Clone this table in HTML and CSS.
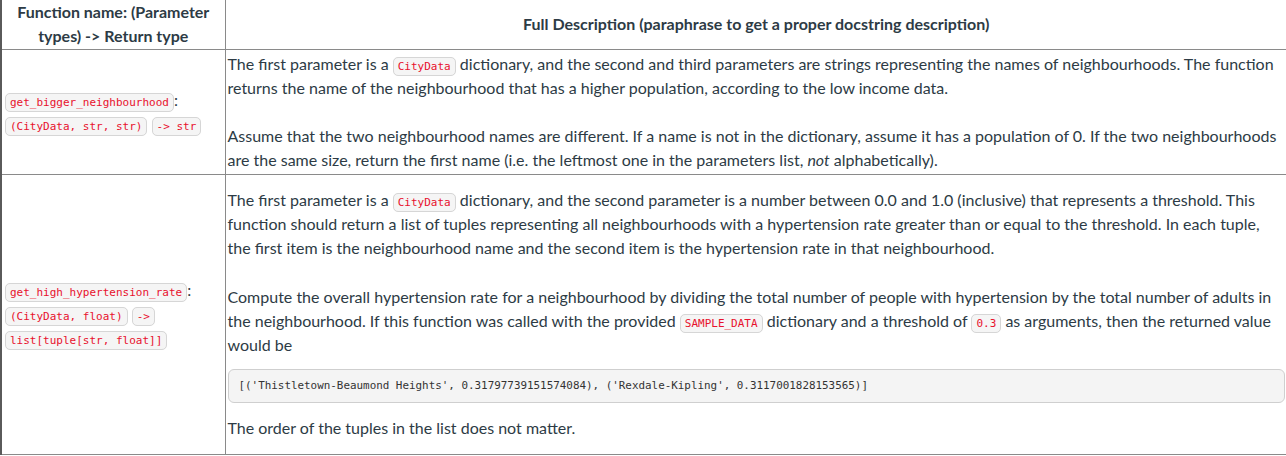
FILE: index.html
```html
<!DOCTYPE html>
<html lang="en">
<head>
<meta charset="utf-8">
<title>Functions</title>
<link rel="stylesheet" href="styles.css">
</head>
<body>
<div class="page">
<table class="spec">
  <thead>
    <tr>
      <th class="col-name">Function name: (Parameter types) -&gt; Return type</th>
      <th class="col-desc">Full Description (paraphrase to get a proper docstring description)</th>
    </tr>
  </thead>
  <tbody>
    <tr class="row-one">
      <td class="name-cell"><code>get_bigger_neighbourhood</code>: <code>(CityData, str, str)</code> <code>-&gt; str</code></td>
      <td class="desc-cell">
        <p class="gap-after">The first parameter is a <code>CityData</code> dictionary, and the second and third parameters are strings representing the names of neighbourhoods. The function returns the name of the neighbourhood that has a higher population, according to the low income data.</p>
        <p>Assume that the two neighbourhood names are different. If a name is not in the dictionary, assume it has a population of 0. If the two neighbourhoods are the same size, return the first name (i.e. the leftmost one in the parameters list, <em>not</em> alphabetically).</p>
      </td>
    </tr>
    <tr class="row-two">
      <td class="name-cell"><code>get_high_hypertension_rate</code>: <code>(CityData, float)</code> <code>-&gt;</code> <code>list[tuple[str, float]]</code></td>
      <td class="desc-cell desc-pad">
        <p class="gap-wide">The first parameter is a <code>CityData</code> dictionary, and the second parameter is a number between 0.0 and 1.0 (inclusive) that represents a threshold. This function should return a list of tuples representing all neighbourhoods with a hypertension rate greater than or equal to the threshold. In each tuple, the first item is the neighbourhood name and the second item is the hypertension rate in that neighbourhood.</p>
        <p class="gap-small">Compute the overall hypertension rate for a neighbourhood by dividing the total number of people with hypertension by the total number of adults in the neighbourhood. If this function was called with the provided <code>SAMPLE_DATA</code> dictionary and a threshold of <code>0.3</code> as arguments, then the returned value would be</p>
        <pre class="sample">[('Thistletown-Beaumond Heights', 0.31797739151574084), ('Rexdale-Kipling', 0.3117001828153565)]</pre>
        <p>The order of the tuples in the list does not matter.</p>
      </td>
    </tr>
  </tbody>
</table>
</div>
</body>
</html>
```
FILE: styles.css
```css
html, body {
  margin: 0;
  padding: 0;
  background: #ffffff;
  overflow: hidden;
}

.page {
  width: 1300px;
  font-family: Lato, "Open Sans", sans-serif;
  font-size: 16px;
  line-height: 24px;
  color: #2d3b45;
}

.spec {
  border-collapse: collapse;
  border-left: 2px solid #5a5a5a;
  table-layout: fixed;
  width: 1288px;
}

.spec th,
.spec td {
  border: 1px solid #8a8a8a;
  vertical-align: middle;
}

.spec thead th {
  border-top: none;
  font-weight: 700;
  text-align: center;
  padding: 0 2px;
  height: 49px;
  box-sizing: border-box;
}

.col-name {
  width: 224px;
}

.spec th.col-name {
  padding: 0 8px;
}

.name-cell {
  padding: 0 2px 0 3px;
}

.desc-cell {
  padding: 2px 2px 2px 2px;
}

.desc-pad {
  padding-top: 13px;
  padding-bottom: 14px;
}

p {
  margin: 0;
}

.gap-after {
  margin-bottom: 24px;
}

.gap-wide {
  margin-bottom: 25px;
}

.gap-small {
  margin-bottom: 12px;
}

code {
  font-family: "DejaVu Sans Mono", "Liberation Mono", monospace;
  font-size: 11px;
  line-height: 13px;
  color: #e8112d;
  background: #f5f5f5;
  border: 1px solid #d6d6d6;
  border-radius: 5px;
  padding: 2px 4px;
}

.sample {
  margin: 0 0 13px 0;
  font-family: "DejaVu Sans Mono", "Liberation Mono", monospace;
  font-size: 10.9px;
  line-height: 12px;
  color: #333333;
  background: #f4f4f4;
  border: 1px solid #cfcfcf;
  border-radius: 6px;
  padding: 10px 10px;
  white-space: pre;
}
```
